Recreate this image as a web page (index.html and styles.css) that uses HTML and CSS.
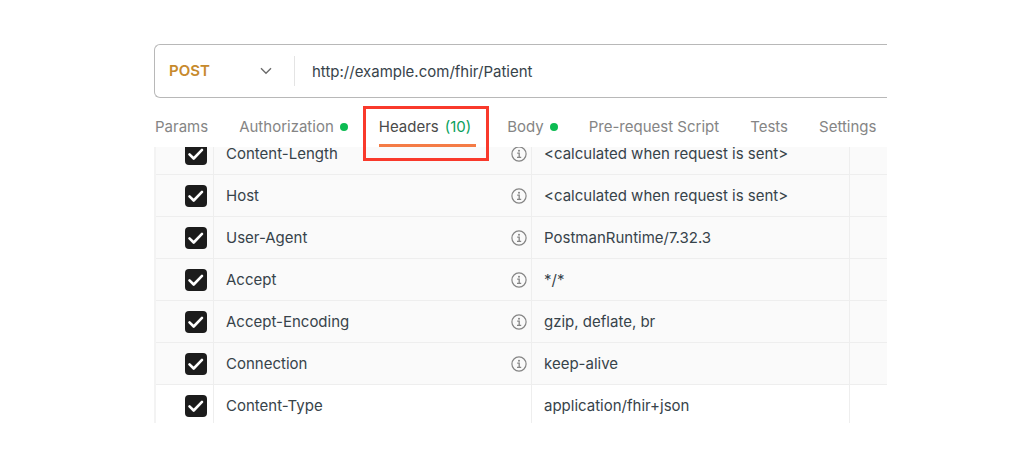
FILE: index.html
```html
<!DOCTYPE html>
<html lang="en">
<head>
  <meta charset="UTF-8">
  <title>POST Patient</title>
  <link rel="stylesheet" href="styles.css">
</head>
<body>

  <svg class="sprite" aria-hidden="true">
    <symbol id="info" viewBox="0 0 16 16">
      <circle cx="8" cy="8" r="7.1" fill="none" stroke="currentColor" stroke-width="1.2"/>
      <path d="M6.2 7.2h2v4M6 11.3h4.2" fill="none" stroke="currentColor" stroke-width="1.3"/>
      <circle cx="8" cy="4.8" r="1" fill="currentColor"/>
    </symbol>
  </svg>

  <main class="request">
    <form class="url-bar">
      <div class="method">
        <select class="method-select" aria-label="Method">
          <option>POST</option>
          <option>GET</option>
        </select>
        <svg class="chevron" viewBox="0 0 12 8" aria-hidden="true"><path d="M1 1.2l5 5 5-5" fill="none" stroke="currentColor" stroke-width="1.4"/></svg>
      </div>
      <input class="url" type="text" aria-label="Request URL" value="http://example.com/fhir/Patient">
    </form>

    <nav class="tabs">
      <a class="tab" href="#params">Params</a>
      <a class="tab" href="#auth">Authorization <span class="dot"></span></a>
      <a class="tab active" href="#headers">Headers <span class="count">(10)</span></a>
      <a class="tab" href="#body">Body <span class="dot"></span></a>
      <a class="tab" href="#pre">Pre-request Script</a>
      <a class="tab" href="#tests">Tests</a>
      <a class="tab" href="#settings">Settings</a>
    </nav>

    <div class="table-scroll" id="headers">
      <table class="headers">
        <colgroup>
          <col class="col-check">
          <col class="col-key">
          <col class="col-value">
          <col class="col-desc">
        </colgroup>
        <tbody>
          <tr class="auto">
            <td class="check"><input type="checkbox" id="h1" checked></td>
            <td><div class="key"><label for="h1">Content-Length</label><svg class="info"><use href="#info"/></svg></div></td>
            <td>&lt;calculated when request is sent&gt;</td>
            <td></td>
          </tr>
          <tr class="auto">
            <td class="check"><input type="checkbox" id="h2" checked></td>
            <td><div class="key"><label for="h2">Host</label><svg class="info"><use href="#info"/></svg></div></td>
            <td>&lt;calculated when request is sent&gt;</td>
            <td></td>
          </tr>
          <tr class="auto">
            <td class="check"><input type="checkbox" id="h3" checked></td>
            <td><div class="key"><label for="h3">User-Agent</label><svg class="info"><use href="#info"/></svg></div></td>
            <td>PostmanRuntime/7.32.3</td>
            <td></td>
          </tr>
          <tr class="auto">
            <td class="check"><input type="checkbox" id="h4" checked></td>
            <td><div class="key"><label for="h4">Accept</label><svg class="info"><use href="#info"/></svg></div></td>
            <td>*/*</td>
            <td></td>
          </tr>
          <tr class="auto">
            <td class="check"><input type="checkbox" id="h5" checked></td>
            <td><div class="key"><label for="h5">Accept-Encoding</label><svg class="info"><use href="#info"/></svg></div></td>
            <td>gzip, deflate, br</td>
            <td></td>
          </tr>
          <tr class="auto">
            <td class="check"><input type="checkbox" id="h6" checked></td>
            <td><div class="key"><label for="h6">Connection</label><svg class="info"><use href="#info"/></svg></div></td>
            <td>keep-alive</td>
            <td></td>
          </tr>
          <tr>
            <td class="check"><input type="checkbox" id="h7" checked></td>
            <td><div class="key"><label for="h7">Content-Type</label></div></td>
            <td>application/fhir+json</td>
            <td></td>
          </tr>
        </tbody>
      </table>
    </div>
  </main>

</body>
</html>
```
FILE: styles.css
```css
* {
  box-sizing: border-box;
}

body {
  margin: 0;
  padding: 44px 137px 32px 154px;
  background: #fff;
  font-family: Inter, "Liberation Sans", sans-serif;
  font-size: 15px;
  line-height: 18px;
  color: #37434a;
}

.sprite {
  display: none;
}

.url-bar {
  display: flex;
  align-items: center;
  height: 54px;
  border: 1px solid #b8b8b8;
  border-right: none;
  border-radius: 6px 0 0 6px;
}

.method {
  display: flex;
  align-items: center;
  width: 140px;
  height: 30px;
  border-right: 1px solid #e4e4e4;
}

.method-select {
  flex: 1;
  height: 30px;
  padding: 0 0 0 14px;
  border: none;
  background: none;
  appearance: none;
  font: 600 15px/20px Inter, "Liberation Sans", sans-serif;
  color: #c78a2c;
}

.chevron {
  width: 12px;
  height: 8px;
  margin-right: 22px;
  color: #6b6b6b;
  pointer-events: none;
}

.url {
  flex: 1;
  height: 30px;
  padding: 0 17px;
  border: none;
  outline: none;
  background: none;
  font: inherit;
  color: inherit;
}

.tabs {
  display: flex;
  gap: 31px;
  height: 49px;
  padding: 19px 0 0 1px;
}

.tab {
  display: flex;
  align-items: center;
  gap: 6px;
  height: 20px;
  color: #858585;
  text-decoration: none;
  white-space: nowrap;
}

.dot {
  width: 8px;
  height: 8px;
  border-radius: 50%;
  background: #0cbb52;
}

.tab.active {
  position: relative;
  padding-right: 5px;
  color: #4a4a4a;
}

.tab.active::before {
  content: "";
  position: absolute;
  left: 0;
  right: 0;
  top: 27px;
  height: 3px;
  background: #f47b45;
}

/* callout around the active tab */
.tab.active::after {
  content: "";
  position: absolute;
  inset: -11px -13px -24px -16px;
  border: 3px solid #f9392b;
}

.count {
  color: #0a9f5c;
}

.table-scroll {
  overflow: hidden;
}

.headers {
  width: 100%;
  margin: -14px 0 -4px;
  border-collapse: separate;
  border-spacing: 0;
  table-layout: fixed;
  border-left: 2px solid #f3f3f3;
}

.col-check {
  width: 58px;
}

.col-key,
.col-value {
  width: 318px;
}

.headers td {
  height: 42px;
  padding: 0 12px;
  border-right: 1px solid #eee;
  border-bottom: 1px solid #eee;
  white-space: nowrap;
}

.headers td:last-child {
  border-right: none;
}

.auto td {
  background: #fafafa;
}

.headers .check {
  padding: 0 6px 0 0;
  text-align: right;
}

.check input {
  width: 22px;
  height: 22px;
  margin: 0;
  border-radius: 4px;
  appearance: none;
  vertical-align: middle;
  background: #1c1c1c;
}

.check input:checked {
  background: #1c1c1c url("data:image/svg+xml,%3Csvg xmlns='http://www.w3.org/2000/svg' viewBox='0 0 22 22'%3E%3Cpath d='M4.5 11.3l4.2 4.2 8.3-8.6' fill='none' stroke='white' stroke-width='2.6' stroke-linecap='round' stroke-linejoin='round'/%3E%3C/svg%3E");
}

.key {
  display: flex;
  align-items: center;
  justify-content: space-between;
}

.info {
  width: 16px;
  height: 16px;
  margin-right: -8px;
  color: #858585;
}
```
